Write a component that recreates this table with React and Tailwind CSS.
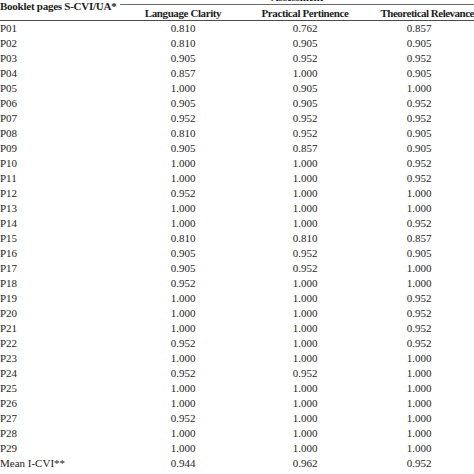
import React from 'react'

const rows = [
  ['P01', '0.810', '0.762', '0.857'],
  ['P02', '0.810', '0.905', '0.905'],
  ['P03', '0.905', '0.952', '0.952'],
  ['P04', '0.857', '1.000', '0.905'],
  ['P05', '1.000', '0.905', '1.000'],
  ['P06', '0.905', '0.905', '0.952'],
  ['P07', '0.952', '0.952', '0.952'],
  ['P08', '0.810', '0.952', '0.905'],
  ['P09', '0.905', '0.857', '0.905'],
  ['P10', '1.000', '1.000', '0.952'],
  ['P11', '1.000', '1.000', '0.952'],
  ['P12', '0.952', '1.000', '1.000'],
  ['P13', '1.000', '1.000', '1.000'],
  ['P14', '1.000', '1.000', '0.952'],
  ['P15', '0.810', '0.810', '0.857'],
  ['P16', '0.905', '0.952', '0.905'],
  ['P17', '0.905', '0.952', '1.000'],
  ['P18', '0.952', '1.000', '1.000'],
  ['P19', '1.000', '1.000', '0.952'],
  ['P20', '1.000', '1.000', '0.952'],
  ['P21', '1.000', '1.000', '0.952'],
  ['P22', '0.952', '1.000', '0.952'],
  ['P23', '1.000', '1.000', '1.000'],
  ['P24', '0.952', '0.952', '1.000'],
  ['P25', '1.000', '1.000', '1.000'],
  ['P26', '1.000', '1.000', '1.000'],
  ['P27', '0.952', '1.000', '1.000'],
  ['P28', '1.000', '1.000', '1.000'],
  ['P29', '1.000', '1.000', '1.000'],
  ['Mean I-CVI**', '0.944', '0.962', '0.952'],
  ['S-CVI/Ave***', '0.944', '0.962', '0.952'],
]

const grid = 'grid grid-cols-[120px_126px_118px_110px]'

const App = () => {
  return (
    <div className="w-[474px] h-[474px] overflow-hidden bg-white text-[#1e1e1e] font-['Liberation_Serif',serif]">
      <div className="-mt-[9px]">
        {/* header */}
        <div className={`${grid} border-b border-[#4a4a4a]`}>
          <div className="row-span-2 self-center pt-[2px] text-[11px] font-bold tracking-[-0.25px] whitespace-nowrap">
            Booklet pages S-CVI/UA*
          </div>
          <div className="col-span-3 h-[14px] border-b border-[#6a6a6a] text-center text-[11px] font-bold leading-[13px] tracking-[-0.2px]">
            Assessment
          </div>
          <div className="h-[15px] text-center text-[11px] font-bold leading-[16px] tracking-[-0.4px] whitespace-nowrap">
            Language Clarity
          </div>
          <div className="h-[15px] text-center text-[11px] font-bold leading-[16px] tracking-[-0.4px] whitespace-nowrap">
            Practical Pertinence
          </div>
          <div className="h-[15px] text-right text-[11px] font-bold leading-[16px] tracking-[-0.5px] whitespace-nowrap">
            Theoretical Relevance
          </div>
        </div>

        {/* body */}
        {rows.map((r) => (
          <div key={r[0]} className={`${grid} h-[15px] text-[11px] leading-[15px]`}>
            <div className="whitespace-nowrap">{r[0]}</div>
            <div className="text-center">{r[1]}</div>
            <div className="text-center">{r[2]}</div>
            <div className="text-center">{r[3]}</div>
          </div>
        ))}
      </div>
    </div>
  )
}

export default App
